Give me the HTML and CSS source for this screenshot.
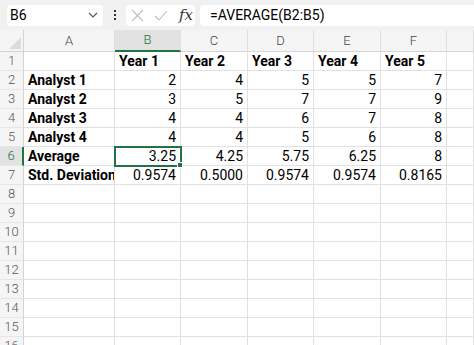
FILE: index.html
```html
<!DOCTYPE html>
<html lang="en">
<head>
    <meta charset="UTF-8">
    <title>Sheet</title>
    <link rel="stylesheet" href="styles.css">
</head>
<body>

<!--  formula bar  -->
<div class="topbar">
    <div class="namebox">
        <span>B6</span>
        <svg width="10" height="6" viewBox="0 0 10 6"><path d="M1 1 L5 5 L9 1" fill="none" stroke="#555" stroke-width="1.2"/></svg>
    </div>
    <div class="dots"><i></i><i></i><i></i></div>
    <div class="fxbox">
        <svg width="13" height="13" viewBox="0 0 13 13"><path d="M1 1 L12 12 M12 1 L1 12" stroke="#bdbdbd" stroke-width="1.1"/></svg>
        <svg width="14" height="11" viewBox="0 0 14 11"><path d="M1 6 L5 10 L13 1" fill="none" stroke="#bdbdbd" stroke-width="1.1"/></svg>
        <span class="fx">fx</span>
    </div>
    <div class="formula">=AVERAGE(B2:B5)</div>
</div>

<div class="sheet">
    <div class="corner"><span class="tri"></span></div>
    <div class="colhead">A</div>
    <div class="colhead sel">B</div>
    <div class="colhead">C</div>
    <div class="colhead">D</div>
    <div class="colhead">E</div>
    <div class="colhead">F</div>
    <div class="colhead"></div>

    <div class="rowhead">1</div>
    <div class="cell"></div>
    <div class="cell b">Year 1</div>
    <div class="cell b">Year 2</div>
    <div class="cell b">Year 3</div>
    <div class="cell b">Year 4</div>
    <div class="cell b">Year 5</div>
    <div class="cell"></div>

    <div class="rowhead">2</div>
    <div class="cell b">Analyst 1</div>
    <div class="cell n">2</div><div class="cell n">4</div><div class="cell n">5</div><div class="cell n">5</div><div class="cell n">7</div>
    <div class="cell"></div>

    <div class="rowhead">3</div>
    <div class="cell b">Analyst 2</div>
    <div class="cell n">3</div><div class="cell n">5</div><div class="cell n">7</div><div class="cell n">7</div><div class="cell n">9</div>
    <div class="cell"></div>

    <div class="rowhead">4</div>
    <div class="cell b">Analyst 3</div>
    <div class="cell n">4</div><div class="cell n">4</div><div class="cell n">6</div><div class="cell n">7</div><div class="cell n">8</div>
    <div class="cell"></div>

    <div class="rowhead">5</div>
    <div class="cell b">Analyst 4</div>
    <div class="cell n">4</div><div class="cell n">4</div><div class="cell n">5</div><div class="cell n">6</div><div class="cell n">8</div>
    <div class="cell"></div>

    <div class="rowhead sel">6</div>
    <div class="cell b">Average</div>
    <div class="cell n active">3.25<span class="handle"></span></div><div class="cell n">4.25</div><div class="cell n">5.75</div><div class="cell n">6.25</div><div class="cell n">8</div>
    <div class="cell"></div>

    <div class="rowhead">7</div>
    <div class="cell b">Std. Deviation</div>
    <div class="cell n">0.9574</div><div class="cell n">0.5000</div><div class="cell n">0.9574</div><div class="cell n">0.9574</div><div class="cell n">0.8165</div>
    <div class="cell"></div>

    <div class="rowhead">8</div><div class="cell"></div><div class="cell"></div><div class="cell"></div><div class="cell"></div><div class="cell"></div><div class="cell"></div><div class="cell"></div>
    <div class="rowhead">9</div><div class="cell"></div><div class="cell"></div><div class="cell"></div><div class="cell"></div><div class="cell"></div><div class="cell"></div><div class="cell"></div>
    <div class="rowhead">10</div><div class="cell"></div><div class="cell"></div><div class="cell"></div><div class="cell"></div><div class="cell"></div><div class="cell"></div><div class="cell"></div>
    <div class="rowhead">11</div><div class="cell"></div><div class="cell"></div><div class="cell"></div><div class="cell"></div><div class="cell"></div><div class="cell"></div><div class="cell"></div>
    <div class="rowhead">12</div><div class="cell"></div><div class="cell"></div><div class="cell"></div><div class="cell"></div><div class="cell"></div><div class="cell"></div><div class="cell"></div>
    <div class="rowhead">13</div><div class="cell"></div><div class="cell"></div><div class="cell"></div><div class="cell"></div><div class="cell"></div><div class="cell"></div><div class="cell"></div>
    <div class="rowhead">14</div><div class="cell"></div><div class="cell"></div><div class="cell"></div><div class="cell"></div><div class="cell"></div><div class="cell"></div><div class="cell"></div>
    <div class="rowhead">15</div><div class="cell"></div><div class="cell"></div><div class="cell"></div><div class="cell"></div><div class="cell"></div><div class="cell"></div><div class="cell"></div>
    <div class="rowhead">16</div><div class="cell"></div><div class="cell"></div><div class="cell"></div><div class="cell"></div><div class="cell"></div><div class="cell"></div><div class="cell"></div>
</div>

</body>
</html>
```

FILE: styles.css
```css
body {
    margin: 0;
    font-family: Roboto, "Noto Sans", sans-serif;
    background: #fff;
    overflow: hidden;
    color: #000;
}

/* formula bar */
.topbar {
    display: flex;
    align-items: center;
    height: 30px;
    background: #f1f1f1;
    padding: 0 0 0 7px;
    box-sizing: border-box;
}

.namebox {
    width: 96px;
    height: 21px;
    background: #fff;
    border-radius: 4px;
    display: flex;
    align-items: center;
    justify-content: space-between;
    padding: 0 5px 0 3px;
    box-sizing: border-box;
    font-size: 14px;
}

.dots {
    width: 23px;
    display: flex;
    flex-direction: column;
    align-items: center;
    gap: 2px;
}
.dots i {
    width: 2px;
    height: 2px;
    background: #333;
    display: block;
}

.fxbox {
    width: 69px;
    height: 21px;
    background: #fff;
    border-radius: 4px;
    display: flex;
    align-items: center;
    gap: 10px;
    padding-left: 5px;
    box-sizing: border-box;
}
.fx {
    font-family: "DejaVu Serif", "Liberation Serif", serif;
    font-style: italic;
    font-size: 15px;
    color: #333;
    margin-left: 1px;
}

.formula {
    flex: 1;
    height: 21px;
    margin-left: 5px;
    background: #fff;
    border-radius: 4px 0 0 4px;
    font-size: 14px;
    line-height: 21px;
    padding-left: 10px;
}

/* grid */
.sheet {
    display: grid;
    grid-template-columns: 24px 91px 66px 67px 66px 67px 66px 27px;
    grid-template-rows: 22px repeat(16, 19px);
    font-size: 14px;
}

.corner {
    background: #f5f5f5;
    border-right: 1px solid #d4d4d4;
    border-bottom: 1px solid #d4d4d4;
    position: relative;
}
.tri {
    position: absolute;
    right: 2px;
    bottom: 2px;
    width: 0;
    height: 0;
    border-left: 12px solid transparent;
    border-bottom: 12px solid #dcdcdc;
}

.colhead {
    background: #f5f5f5;
    border-right: 1px solid #dedede;
    border-bottom: 1px solid #d4d4d4;
    text-align: center;
    line-height: 21px;
    color: #444;
    font-size: 13px;
    font-weight: 300;
}
.colhead.sel {
    background: #e2e2e2;
    color: #217346;
    border-bottom: 2px solid #217346;
    line-height: 20px;
}

.rowhead {
    background: #f5f5f5;
    border-right: 1px solid #d4d4d4;
    border-bottom: 1px solid #e6e6e6;
    text-align: center;
    line-height: 18px;
    color: #555;
    font-size: 13px;
    font-weight: 300;
}
.rowhead.sel {
    background: #e2e2e2;
    color: #217346;
    border-right: 2px solid #217346;
}

.cell {
    border-right: 1px solid #e1e1e1;
    border-bottom: 1px solid #e1e1e1;
    line-height: 18px;
    padding: 0 4px;
    white-space: nowrap;
    overflow: hidden;
}
.cell.b {
    font-weight: bold;
}
.cell.n {
    text-align: right;
}
.cell.active {
    outline: 2px solid #217346;
    outline-offset: -1px;
    position: relative;
    overflow: visible;
    z-index: 1;
}
.handle {
    position: absolute;
    right: -3px;
    bottom: -3px;
    width: 4px;
    height: 4px;
    background: #217346;
    border: 1px solid #fff;
}
```
